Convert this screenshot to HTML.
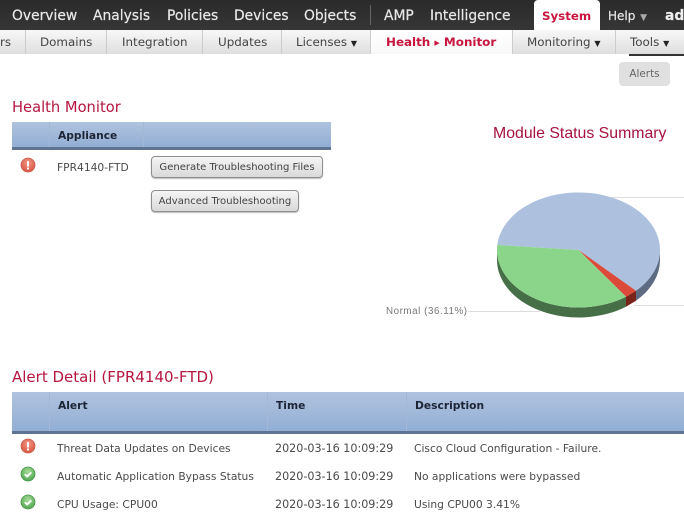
<!DOCTYPE html>
<html><head><meta charset="utf-8">
<style>
html,body{margin:0;padding:0;background:#fff}
#p{position:relative;width:684px;height:516px;overflow:hidden;background:#fff;font-family:"DejaVu Sans","Liberation Sans",sans-serif;color:#444}
#p div{position:absolute;white-space:nowrap}
.top{top:7px;font-size:13.85px;line-height:18px;color:#e8e8e8;-webkit-text-stroke:.2px #e8e8e8}
.sub{top:34px;font-size:11.9px;line-height:16px;color:#444}
.sep{top:30px;width:1px;height:24px;background:#ccc}
.h{font-size:15px;color:#b5173f;line-height:20px}
.th{background:linear-gradient(#b0c3de,#92aed5);border-bottom:3px solid #5f7493;box-sizing:border-box}
.hd{font-size:10.7px;font-weight:bold;color:#1d2535;line-height:14px}
.c{font-size:10.7px;line-height:14px;color:#4a4a4a}
.t{font-size:11.15px}
.vs{width:1px;background:#a3b8d6}
.btn{height:22px;box-sizing:border-box;border:1px solid #8f8f8f;border-radius:4px;background:linear-gradient(#f5f5f5,#d9d9d9);font-size:10.05px;line-height:21px;color:#444;text-align:center;box-shadow:0 1px 1px #bbb}
</style></head><body>
<div id="p">
<div style="left:0;top:0;width:684px;height:30px;background:linear-gradient(#2a2a2a,#363636)"></div>
<div class="top" style="left:12px">Overview</div>
<div class="top" style="left:93px">Analysis</div>
<div class="top" style="left:167px">Policies</div>
<div class="top" style="left:234px">Devices</div>
<div class="top" style="left:304px">Objects</div>
<div style="left:370px;top:5px;width:1px;height:20px;background:#666"></div>
<div class="top" style="left:384px">AMP</div>
<div class="top" style="left:430px">Intelligence</div>
<div style="left:534px;top:0;width:66px;height:30px;background:#fff;border-radius:4px 4px 0 0"></div>
<div class="top" style="left:542px;font-weight:bold;color:#c8163f;-webkit-text-stroke:0;font-size:11.8px">System</div>
<div class="top" style="left:608px;font-size:12px">Help <span style="font-size:9px;color:#aaa;-webkit-text-stroke:0;margin-left:1px">▼</span></div>
<div class="top" style="left:665px;font-weight:bold;color:#eee">admin</div>

<div style="left:0;top:30px;width:684px;height:24px;background:linear-gradient(#f8f8f8,#dedede)"></div>
<div class="sub" style="left:0px">rs</div>
<div class="sep" style="left:25px"></div>
<div class="sub" style="left:40px">Domains</div>
<div class="sep" style="left:106px"></div>
<div class="sub" style="left:122px">Integration</div>
<div class="sep" style="left:202px"></div>
<div class="sub" style="left:218px">Updates</div>
<div class="sep" style="left:281px"></div>
<div class="sub" style="left:296px">Licenses <span style="font-size:8px;color:#222">▼</span></div>
<div style="left:370px;top:30px;width:143px;height:24px;background:linear-gradient(#fff,#f8f8f8);border-left:1px solid #ccc;border-right:1px solid #ccc;box-sizing:border-box"></div>
<div class="sub" style="left:386px;font-weight:bold;color:#c8163f;font-size:11.9px">Health <span style="font-size:7px;vertical-align:1px">▶</span> Monitor</div>
<div class="sub" style="left:527px">Monitoring <span style="font-size:8px;color:#222">▼</span></div>
<div class="sep" style="left:615px"></div>
<div class="sub" style="left:630px">Tools <span style="font-size:8px;color:#222">▼</span></div>
<div style="left:629px;top:54px;width:55px;height:2px;background:#333"></div>

<div style="left:619px;top:62px;width:51px;height:24px;background:#e0e0e0;border-radius:4px;font-size:10.4px;line-height:25px;text-align:center;color:#666">Alerts</div>

<div class="h" style="left:12px;top:98px;font-size:14.7px">Health Monitor</div>
<div class="th" style="left:12px;top:122px;width:319px;height:28px"></div>
<div class="vs" style="left:49px;top:122px;height:25px"></div>
<div class="vs" style="left:143px;top:122px;height:25px"></div>
<div class="hd" style="left:58px;top:129px">Appliance</div>
<div class="c" style="left:57px;top:161px">FPR4140-FTD</div>
<div class="btn" style="left:151px;top:156px;width:172px">Generate Troubleshooting Files</div>
<div class="btn" style="left:151px;top:190px;width:148px">Advanced Troubleshooting</div>

<svg style="position:absolute;left:0;top:0" width="684" height="516">
<defs>
<radialGradient id="r" cx="50%" cy="35%" r="65%"><stop offset="0" stop-color="#f29a88"/><stop offset="1" stop-color="#d8533f"/></radialGradient>
<radialGradient id="g" cx="50%" cy="35%" r="65%"><stop offset="0" stop-color="#a8dc96"/><stop offset="1" stop-color="#4fa553"/></radialGradient>
<g id="err"><circle r="7" cx="7" cy="7" fill="url(#r)" stroke="#c9604f" stroke-width=".8"/><rect x="6" y="3" width="2" height="5.5" fill="#fff"/><rect x="6" y="9.5" width="2" height="2" fill="#fff"/></g>
<g id="ok"><circle r="7" cx="7" cy="7" fill="url(#g)" stroke="#4c9a50" stroke-width=".8"/><path d="M3.8 7.2l2.3 2.3 4.2-4.2" fill="none" stroke="#fff" stroke-width="1.9"/></g>
</defs>
<use href="#err" x="21" y="158"/>
<use href="#err" x="21" y="439"/>
<use href="#ok" x="21" y="467"/>
<use href="#ok" x="21" y="495"/>

<line x1="612" y1="197.500" x2="684" y2="197.500" stroke="#ddd"/>
<line x1="634" y1="305.500" x2="684" y2="305.500" stroke="#ddd"/>
<line x1="468" y1="311.500" x2="540" y2="311.500" stroke="#ddd"/>

<path d="M497 250 A81.500 57.500 0 0 0 626 296.700 L626 306.700 A81.500 57.500 0 0 1 497 260Z" fill="#476f47"/>
<path d="M626 296.700 L636 290.700 L636 300.700 L626 306.700Z" fill="#7a2319"/>
<path d="M636 290.700 A81.500 57.500 0 0 0 660 250 L660 260 A81.500 57.500 0 0 1 636 300.700Z" fill="#5d6b83"/>
<path d="M578.500 250 L497.300 245 A81.500 57.500 0 1 1 636 290.700Z" fill="#adc1df"/>
<path d="M578.500 250 L636 290.700 L626 296.700Z" fill="#dc4a3a"/>
<path d="M578.500 250 L626 296.700 A81.500 57.500 0 0 1 497.300 245Z" fill="#8bd58a"/>
</svg>
<div style="left:493px;top:124px;font-family:'Liberation Sans',sans-serif;font-size:15.850px;line-height:20px;color:#a5123f">Module Status Summary</div>
<div style="left:386px;top:305px;font-size:9.800px;line-height:13px;color:#777;font-family:'Liberation Sans',sans-serif;letter-spacing:.55px">Normal (36.11%)</div>

<div class="h" style="left:12px;top:367px">Alert Detail (FPR4140-FTD)</div>
<div class="th" style="left:12px;top:392px;width:672px;height:42px"></div>
<div class="vs" style="left:49px;top:392px;height:39px"></div>
<div class="vs" style="left:267px;top:392px;height:39px"></div>
<div class="vs" style="left:406px;top:392px;height:39px"></div>
<div class="hd" style="left:58px;top:399px">Alert</div>
<div class="hd" style="left:276px;top:399px">Time</div>
<div class="hd" style="left:415px;top:399px">Description</div>

<div class="c" style="left:57px;top:442px">Threat Data Updates on Devices</div>
<div class="c t" style="left:275px;top:442px">2020-03-16 10:09:29</div>
<div class="c" style="left:414px;top:442px">Cisco Cloud Configuration - Failure.</div>
<div class="c" style="left:57px;top:470px">Automatic Application Bypass Status</div>
<div class="c t" style="left:275px;top:470px">2020-03-16 10:09:29</div>
<div class="c" style="left:414px;top:470px">No applications were bypassed</div>
<div class="c" style="left:57px;top:498px">CPU Usage: CPU00</div>
<div class="c t" style="left:275px;top:498px">2020-03-16 10:09:29</div>
<div class="c" style="left:414px;top:498px">Using CPU00 3.41%</div>
</div>
</body></html>
